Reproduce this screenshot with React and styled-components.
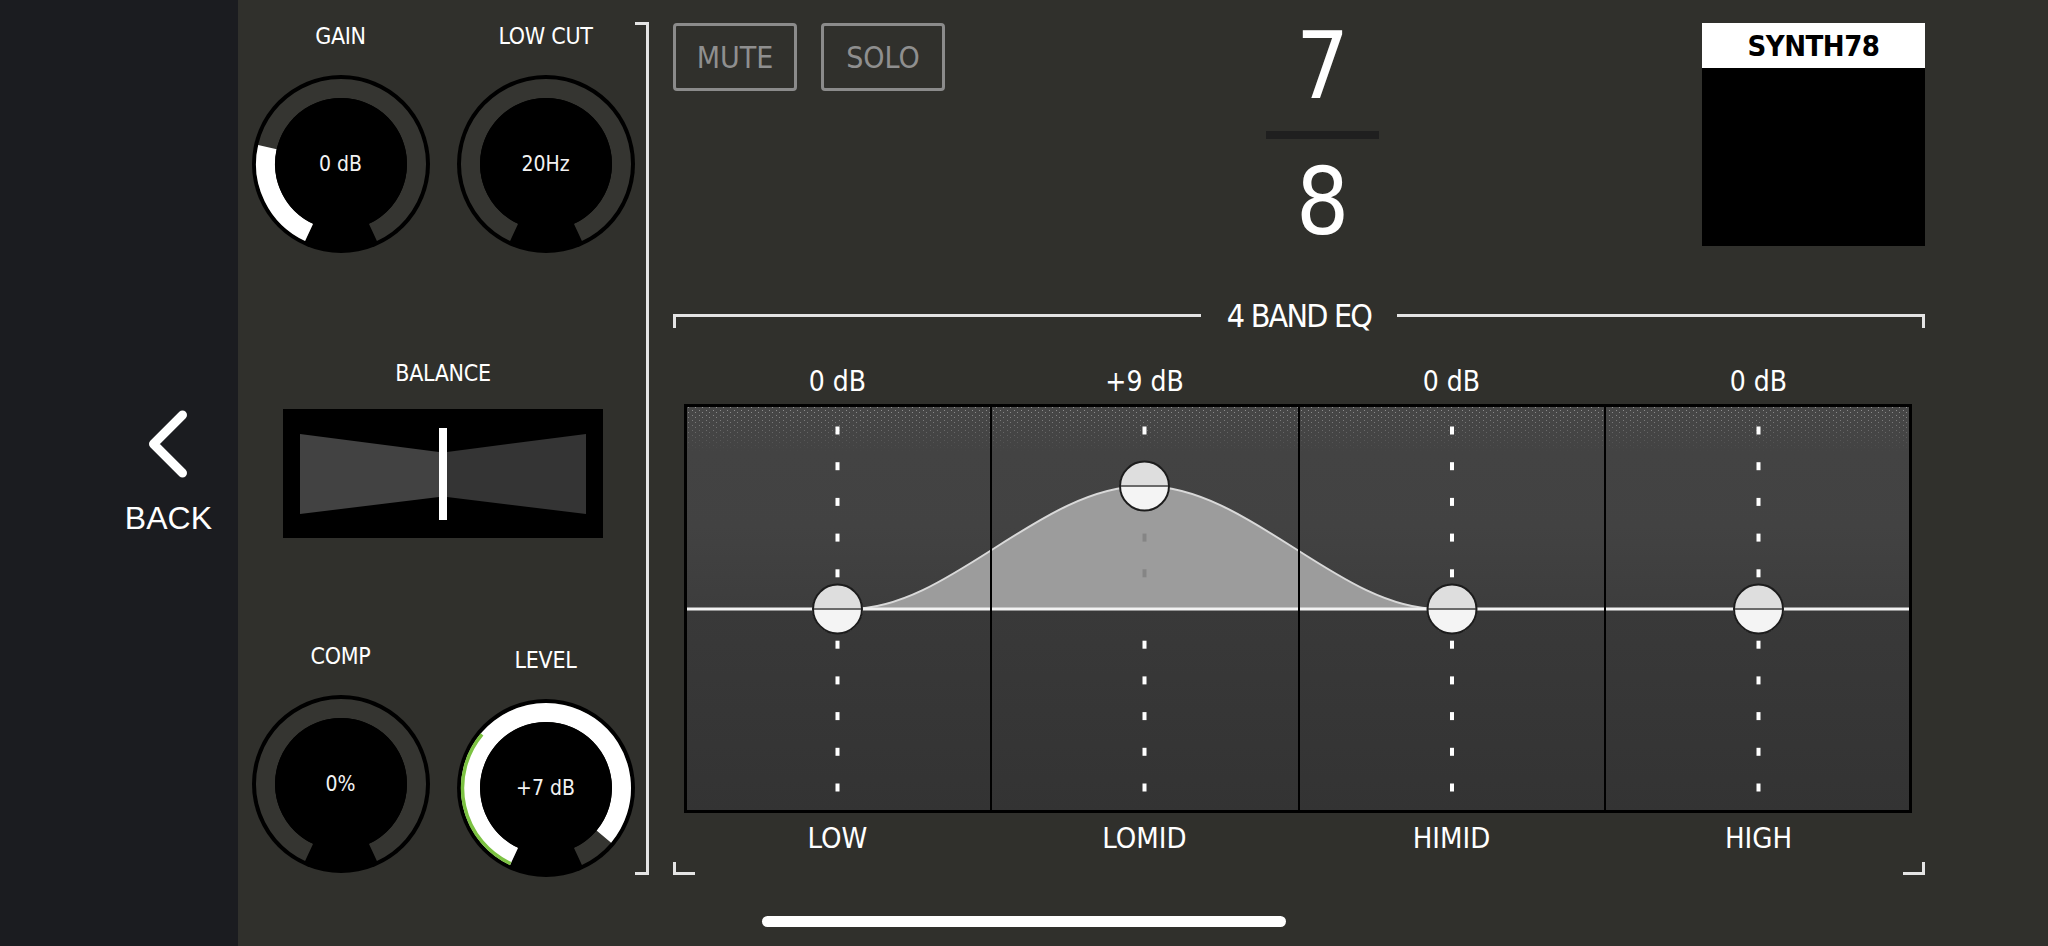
import React from 'react';
import styled, { createGlobalStyle } from 'styled-components';

const cond = `"DejaVu Sans Condensed", "Roboto Condensed", Roboto, sans-serif`;

const GlobalStyle = createGlobalStyle`
  html, body {
    margin: 0;
    padding: 0;
    background: #30302c;
  }
  body {
    font-family: ${cond};
    font-stretch: condensed;
    color: #fff;
  }
`;

// knob geometry (clockwise degrees from top)
const K = 89;
const polar = (r, a) => {
  const rad = (a * Math.PI) / 180;
  return [K + r * Math.sin(rad), K - r * Math.cos(rad)];
};
const arc = (r, a1, a2) => {
  const [x1, y1] = polar(r, a1);
  const [x2, y2] = polar(r, a2);
  const large = a2 - a1 > 180 ? 1 : 0;
  return `M${x1.toFixed(2)} ${y1.toFixed(2)} A${r} ${r} 0 ${large} 1 ${x2.toFixed(2)} ${y2.toFixed(2)}`;
};
const START = 205;
const END = 515;

const Knob = ({ label, value, to, green, $top = 0 }) => (
  <KnobBlock $top={$top}>
    <Label>{label}</Label>
    <KnobFace>
      <svg width="178" height="178" viewBox="0 0 178 178">
        <circle cx={K} cy={K} r="89" fill="#000" />
        <path d={arc(75.5, START, END)} stroke="#353531" strokeWidth="19" fill="none" />
        {to && <path d={arc(75.5, START, to)} stroke="#fff" strokeWidth="19" fill="none" />}
        {green && <path d={arc(83.5, START, green)} stroke="#7cc242" strokeWidth="3.5" fill="none" />}
        <circle cx={K} cy={K} r="66" fill="#000" />
      </svg>
      <KnobValue>{value}</KnobValue>
    </KnobFace>
  </KnobBlock>
);

const Balance = () => (
  <BalanceBlock>
    <Label>BALANCE</Label>
    <BalanceBox>
      <svg width="320" height="129" viewBox="0 0 320 129">
        <polygon points="17,25 156,43 156,88 17,105" fill="#424242" />
        <polygon points="164,43 303,25 303,105 164,88" fill="#343434" />
        <rect x="156" y="19" width="8" height="92" fill="#fff" />
      </svg>
    </BalanceBox>
  </BalanceBlock>
);

// EQ plot geometry
const PW = 1228;
const PH = 409;
const ZERO = 205;
const centers = [153.5, 460.5, 768, 1074.5];
const dividers = [307, 615, 921];
const dashYs = Array.from({ length: 11 }, (_, i) => ZERO + (i - 5) * 35.7).filter(
  (_, i) => i !== 5
);
const curve = 'M166 205 C266 205 356 82 460.5 82 C565 82 655 205 755 205';
// dashes of the LOMID column that sit inside the boosted area
const dimDashes = dashYs.filter((y) => y > 110 && y < ZERO);

const EqKnob = ({ x, y }) => (
  <g transform={`translate(${x} ${y})`}>
    <circle r="25" fill="#dedede" />
    <path d="M-25 0 A25 25 0 0 0 25 0 Z" fill="#f4f4f4" />
    <line x1="-24" y1="0" x2="24" y2="0" stroke="#6a6a6a" strokeWidth="2" />
    <circle r="24.5" fill="none" stroke="#1c1c1c" strokeWidth="2" />
  </g>
);

const EqPlot = () => (
  <PlotBox>
    <svg width={PW} height={PH} viewBox={`0 0 ${PW} ${PH}`}>
      <defs>
        <linearGradient id="bg" x1="0" y1="0" x2="0" y2="1">
          <stop offset="0" stopColor="#474747" />
          <stop offset="0.12" stopColor="#434343" />
          <stop offset="0.3" stopColor="#424242" />
          <stop offset="0.5" stopColor="#3d3d3d" />
          <stop offset="0.5" stopColor="#393939" />
          <stop offset="1" stopColor="#333333" />
        </linearGradient>
        <pattern id="dots" width="7" height="5" patternUnits="userSpaceOnUse">
          <rect x="1" y="1" width="1" height="1" fill="#fff" />
          <rect x="4" y="3" width="1" height="1" fill="#fff" />
        </pattern>
        <linearGradient id="fade" x1="0" y1="0" x2="0" y2="1">
          <stop offset="0" stopColor="#fff" stopOpacity="0.45" />
          <stop offset="1" stopColor="#fff" stopOpacity="0" />
        </linearGradient>
        <mask id="fadeMask">
          <rect x="0" y="0" width={PW} height="48" fill="url(#fade)" />
        </mask>
      </defs>
      <rect x="0" y="0" width={PW} height={PH} fill="url(#bg)" />
      <rect x="0" y="0" width={PW} height="48" fill="url(#dots)" mask="url(#fadeMask)" />
      {centers.map((cx) =>
        dashYs.map((dy) => (
          <rect key={`${cx}-${dy}`} x={cx - 2} y={dy - 4} width="4" height="8" fill="#fff" />
        ))
      )}
      <path d={`${curve} L755 205 Z`} fill="#9c9c9c" />
      {dimDashes.map((dy) => (
        <rect key={dy} x={centers[1] - 2} y={dy - 4} width="4" height="8" fill="#858585" />
      ))}
      <path d={curve} fill="none" stroke="#d9d9d9" strokeWidth="2" />
      <rect x="0" y={ZERO - 1.5} width={PW} height="3" fill="#f2f2f2" />
      {dividers.map((x) => (
        <rect key={x} x={x - 1} y="0" width="2" height={PH} fill="#000" />
      ))}
      <rect x="1.5" y="1.5" width={PW - 3} height={PH - 3} fill="none" stroke="#000" strokeWidth="3" />
      <EqKnob x={centers[0]} y={ZERO} />
      <EqKnob x={centers[1]} y={82} />
      <EqKnob x={centers[2]} y={ZERO} />
      <EqKnob x={centers[3]} y={ZERO} />
    </svg>
  </PlotBox>
);

const bands = [
  { name: 'LOW', gain: '0 dB' },
  { name: 'LOMID', gain: '+9 dB' },
  { name: 'HIMID', gain: '0 dB' },
  { name: 'HIGH', gain: '0 dB' },
];

export default function App() {
  return (
    <>
      <GlobalStyle />
      <Screen>
        <Sidebar>
          <BackButton>
            <svg width="42" height="70" viewBox="0 0 42 70">
              <path
                d="M35.5 5 L6.5 34 L35.5 63"
                fill="none"
                stroke="#fff"
                strokeWidth="9"
                strokeLinecap="round"
                strokeLinejoin="round"
              />
            </svg>
            <BackText>BACK</BackText>
          </BackButton>
        </Sidebar>
        <Main>
          <Controls>
            <Knob label="GAIN" value="0 dB" to={283} />
            <Knob label="LOW CUT" value="20Hz" />
            <Balance />
            <Knob label="COMP" value="0%" $top={107} />
            <Knob label="LEVEL" value="+7 dB" to={490} green={310} $top={111} />
          </Controls>
          <Bracket />
          <RightPanel>
            <TopRow>
              <Buttons>
                <ToggleButton>MUTE</ToggleButton>
                <ToggleButton>SOLO</ToggleButton>
              </Buttons>
              <Fraction>
                <Digit>7</Digit>
                <FractionBar />
                <Digit $lower>8</Digit>
              </Fraction>
              <SynthBox>
                <SynthName>SYNTH78</SynthName>
                <SynthBody />
              </SynthBox>
            </TopRow>
            <EqHeader>
              <HeaderLine $side="left" />
              <EqTitle>4 BAND EQ</EqTitle>
              <HeaderLine $side="right" />
            </EqHeader>
            <EqBody>
              <BandRow>
                {bands.map((b) => (
                  <GainLabel key={b.name}>{b.gain}</GainLabel>
                ))}
              </BandRow>
              <EqPlot />
              <BandRow $bottom>
                {bands.map((b) => (
                  <BandName key={b.name}>{b.name}</BandName>
                ))}
              </BandRow>
            </EqBody>
            <Corners>
              <Corner $side="left" />
              <Corner $side="right" />
            </Corners>
          </RightPanel>
        </Main>
        <HomeIndicator />
      </Screen>
    </>
  );
}

const Screen = styled.div`
  position: relative;
  display: flex;
  width: 2048px;
  height: 946px;
  overflow: hidden;
  background: #30302c;
`;

const Sidebar = styled.aside`
  width: 238px;
  flex: 0 0 238px;
  background: #1b1c20;
  display: flex;
  justify-content: flex-end;
  align-items: center;
  padding-right: 26px;
  box-sizing: border-box;
`;

const BackButton = styled.div`
  display: flex;
  flex-direction: column;
  align-items: center;
  gap: 22px;
  margin-top: -2px;
`;

const BackText = styled.span`
  font-family: 'Liberation Sans', Arial, sans-serif;
  font-stretch: normal;
  font-size: 32px;
  line-height: 32px;
  color: #fff;
`;

const Main = styled.main`
  flex: 1;
  display: flex;
  align-items: flex-start;
`;

const Controls = styled.section`
  display: grid;
  grid-template-columns: 205px 205px;
  padding-top: 25px;
`;

const Label = styled.div`
  font-size: 23px;
  line-height: 23px;
  font-weight: 500;
  color: #fff;
  white-space: nowrap;
  letter-spacing: -0.3px;
`;

const KnobBlock = styled.div`
  display: flex;
  flex-direction: column;
  align-items: center;
  margin-top: ${({ $top }) => $top}px;
`;

const KnobFace = styled.div`
  display: grid;
  width: 178px;
  height: 178px;
  margin-top: 27px;
  & > * {
    grid-area: 1 / 1;
  }
`;

const KnobValue = styled.span`
  align-self: center;
  justify-self: center;
  font-size: 21px;
  line-height: 21px;
  color: #f2f2f2;
`;

const BalanceBlock = styled.div`
  grid-column: 1 / span 2;
  display: flex;
  flex-direction: column;
  align-items: center;
  margin-top: 109px;
`;

const BalanceBox = styled.div`
  width: 320px;
  height: 129px;
  margin-top: 24px;
  background: #000;
  svg {
    display: block;
  }
`;

const Bracket = styled.div`
  box-sizing: border-box;
  width: 14px;
  height: 853px;
  margin-top: 22px;
  margin-left: -13px;
  border: 3px solid #e4e4e4;
  border-left: none;
`;

const RightPanel = styled.section`
  flex: 1;
  display: flex;
  flex-direction: column;
  padding: 23px 123px 0 24px;
`;

const TopRow = styled.div`
  display: flex;
  align-items: flex-start;
  height: 223px;
`;

const Buttons = styled.div`
  display: flex;
  gap: 24px;
`;

const ToggleButton = styled.button`
  box-sizing: border-box;
  width: 124px;
  height: 68px;
  border: 3px solid #8b8b8b;
  border-radius: 4px;
  background: transparent;
  color: #8f8f8f;
  font-family: ${cond};
  font-stretch: condensed;
  font-size: 30px;
  font-weight: 500;
  padding: 0;
  cursor: pointer;
`;

const Fraction = styled.div`
  display: flex;
  flex-direction: column;
  align-items: center;
  width: 113px;
  margin-left: 321px;
  margin-top: 3px;
`;

const Digit = styled.span`
  font-size: 93px;
  line-height: 80px;
  color: #fff;
  margin-top: ${({ $lower }) => ($lower ? '23px' : '0')};
`;

const FractionBar = styled.div`
  width: 113px;
  height: 8px;
  margin-top: 25px;
  background: #1f1f1f;
`;

const SynthBox = styled.div`
  margin-left: auto;
  width: 223px;
  display: flex;
  flex-direction: column;
`;

const SynthName = styled.div`
  height: 45px;
  background: #fff;
  color: #000;
  display: flex;
  align-items: center;
  justify-content: center;
  font-size: 29px;
  font-weight: 600;
  letter-spacing: -0.5px;
`;

const SynthBody = styled.div`
  height: 178px;
  background: #000;
`;

const EqHeader = styled.div`
  display: flex;
  align-items: flex-start;
  margin-top: 54px;
  height: 33px;
  gap: 26px;
`;

const HeaderLine = styled.div`
  flex: 1;
  box-sizing: border-box;
  height: 14px;
  margin-top: 14px;
  border-top: 3px solid #e4e4e4;
  ${({ $side }) =>
    $side === 'left' ? 'border-left: 3px solid #e4e4e4;' : 'border-right: 3px solid #e4e4e4;'}
`;

const EqTitle = styled.div`
  font-size: 32px;
  line-height: 33px;
  font-weight: 500;
  color: #fff;
  white-space: nowrap;
  letter-spacing: -1.8px;
`;

const EqBody = styled.div`
  margin: 0 13px 0 11px;
  display: flex;
  flex-direction: column;
`;

const BandRow = styled.div`
  display: grid;
  grid-template-columns: repeat(4, 1fr);
  margin-top: ${({ $bottom }) => ($bottom ? '11px' : '35px')};
  margin-bottom: ${({ $bottom }) => ($bottom ? '0' : '8px')};
  text-align: center;
`;

const GainLabel = styled.span`
  font-size: 28px;
  line-height: 28px;
  font-weight: 500;
  color: #fff;
`;

const BandName = styled.span`
  font-size: 29px;
  line-height: 29px;
  font-weight: 500;
  color: #fff;
`;

const PlotBox = styled.div`
  width: ${PW}px;
  height: ${PH}px;
  svg {
    display: block;
  }
`;

const Corners = styled.div`
  display: flex;
  justify-content: space-between;
  margin-top: 9px;
`;

const Corner = styled.div`
  box-sizing: border-box;
  width: 22px;
  height: 13px;
  border-bottom: 3px solid #e4e4e4;
  ${({ $side }) =>
    $side === 'left' ? 'border-left: 3px solid #e4e4e4;' : 'border-right: 3px solid #e4e4e4;'}
`;

const HomeIndicator = styled.div`
  position: absolute;
  left: 50%;
  bottom: 19px;
  width: 524px;
  height: 11px;
  margin-left: -262px;
  border-radius: 6px;
  background: #fff;
`;
